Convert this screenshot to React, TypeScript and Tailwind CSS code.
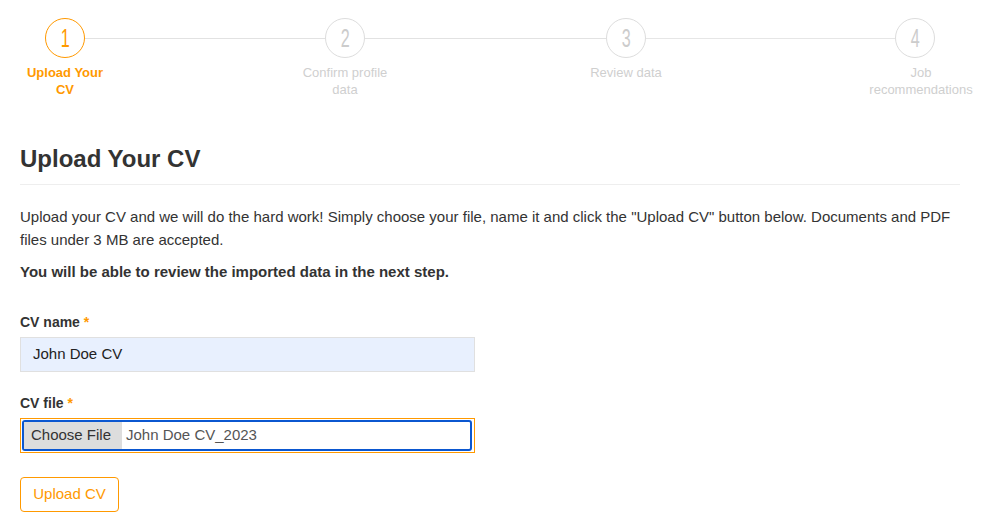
const steps = [
  { n: "1", label: ["Upload Your", "CV"], active: true },
  { n: "2", label: ["Confirm profile", "data"], active: false },
  { n: "3", label: ["Review data"], active: false },
  { n: "4", label: ["Job", "recommendations"], active: false },
];

function StepCircle({ n, active }: { n: string; active: boolean }) {
  return (
    <div
      className={`flex h-[40px] w-[40px] shrink-0 items-center justify-center rounded-full border ${
        active ? "border-[#f90] text-[#f90]" : "border-[#ddd] text-[#ccc]"
      }`}
    >
      <span className="inline-block scale-x-[0.62] text-[26px] font-light leading-none">{n}</span>
    </div>
  );
}

function Stepper() {
  return (
    <div className="relative h-[110px]">
      <div className="flex items-center pt-[18px] pl-[45px]">
        <StepCircle n="1" active />
        <div className="h-px w-[240px] bg-[#e2e2e2]" />
        <StepCircle n="2" active={false} />
        <div className="h-px w-[241px] bg-[#e2e2e2]" />
        <StepCircle n="3" active={false} />
        <div className="h-px w-[249px] bg-[#e6e6e6]" />
        <StepCircle n="4" active={false} />
      </div>
      {/* labels are centred below their circles */}
      {steps.map((s, i) => {
        const centers = [65, 345, 626, 921];
        return (
          <div
            key={s.n}
            className={`absolute top-[64px] w-[130px] text-center text-[13px] leading-[17px] ${
              s.active ? "font-bold text-[#f90]" : "text-[#cfcfcf]"
            }`}
            style={{ left: centers[i] - 65 }}
          >
            {s.label.map((l) => (
              <div key={l}>{l}</div>
            ))}
          </div>
        );
      })}
    </div>
  );
}

export default function App() {
  return (
    <div
      className="min-h-[528px] w-[989px] bg-white text-[#333]"
      style={{ fontFamily: '"Liberation Sans", Arial, sans-serif' }}
    >
      <Stepper />
      <div className="w-[940px] pl-[20px] box-content">
        <h1 className="mt-[32px] text-[24px] font-bold leading-[34px] text-[#333]">Upload Your CV</h1>
        <div className="mt-[8px] h-px w-[940px] bg-[#eee]" />
        <p className="mt-[20px] text-[15px] leading-[23px] text-[#333]">
          Upload your CV and we will do the hard work! Simply choose your file, name it and click the "Upload CV" button below. Documents and PDF files under 3 MB are accepted.
        </p>
        <p className="mt-[9px] text-[15px] font-bold leading-[23px]">
          You will be able to review the imported data in the next step.
        </p>

        <div className="mt-[29px] text-[14px] font-bold leading-[20px]">
          CV name <span className="text-[#f90]">*</span>
        </div>
        <div className="mt-[5px] flex h-[35px] w-[455px] items-center border border-[#e0e0e0] bg-[#e8f0fe] px-[12px] text-[15px] text-[#222]">
          John Doe CV
        </div>

        <div className="mt-[21px] text-[14px] font-bold leading-[20px]">
          CV file <span className="text-[#f90]">*</span>
        </div>
        <div className="mt-[5px] h-[35px] w-[455px] border border-[#f90] py-px pl-px pr-[2px]">
          <div className="flex h-full w-full items-stretch overflow-hidden rounded-[3px] border-2 border-[#0b57d0] text-[15px]">
            <div className="flex w-[98px] items-center bg-[#ddd] pl-[7px] text-[#333]">Choose File</div>
            <div className="flex items-center pl-[4px] text-[#555]">John Doe CV_2023</div>
          </div>
        </div>

        <button className="mt-[24px] flex h-[35px] w-[99px] items-center justify-center rounded-[4px] border border-[#f90] bg-white text-[15px] text-[#f90]">
          Upload CV
        </button>
      </div>
    </div>
  );
}
